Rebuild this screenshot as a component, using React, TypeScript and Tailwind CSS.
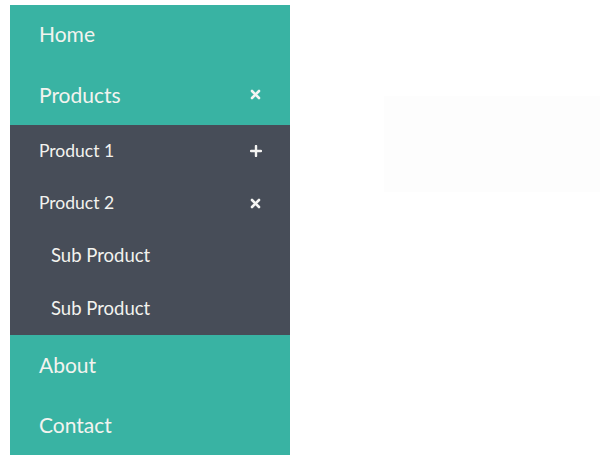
import React from "react";

const X = () => (
  <svg width="11" height="11" viewBox="0 0 11 11" className="shrink-0">
    <path d="M2 2 L9 9 M9 2 L2 9" stroke="#f4f4f2" strokeWidth="2.6" strokeLinecap="round" />
  </svg>
);

const Plus = () => (
  <svg width="12" height="12" viewBox="0 0 12 12" className="shrink-0">
    <path d="M6 1 V11 M1 6 H11" stroke="#f4f4f2" strokeWidth="2.4" strokeLinecap="round" />
  </svg>
);

export default function App() {
  const font = { fontFamily: "Lato, 'Open Sans', sans-serif" };
  return (
    <div className="w-[600px] h-[468px] bg-white flex items-start" style={font}>
      <nav className="ml-[10px] mt-[5px] w-[280px] text-[#f3f3ef]">
        <div className="bg-[#39b3a3]">
          <div className="h-[60px] flex items-center pl-[29px] pb-[2px] text-[21px]">Home</div>
          <div className="h-[60px] flex items-center justify-between pl-[29px] pr-[29px] pb-[1px] text-[21px]">
            <span>Products</span>
            <X />
          </div>
        </div>
        <div className="bg-[#474d58]">
          <div className="h-[52px] flex items-center justify-between pl-[29px] pr-[28px] text-[17.5px]">
            <span>Product 1</span>
            <Plus />
          </div>
          <div className="h-[52px] flex items-center justify-between pl-[29px] pr-[29px] text-[17.5px]">
            <span>Product 2</span>
            <X />
          </div>
          <div className="h-[53px] flex items-center pl-[41px] text-[18.5px]">Sub Product</div>
          <div className="h-[53px] flex items-center pl-[41px] text-[18.5px]">Sub Product</div>
        </div>
        <div className="bg-[#39b3a3]">
          <div className="h-[60px] flex items-center pl-[29px] pb-[1px] text-[21px]">About</div>
          <div className="h-[60px] flex items-center pl-[29px] pb-[1px] text-[21px]">Contact</div>
        </div>
      </nav>
      <div className="ml-[94px] mt-[96px] w-[216px] h-[96px] bg-[#fdfdfd]" />
    </div>
  );
}
